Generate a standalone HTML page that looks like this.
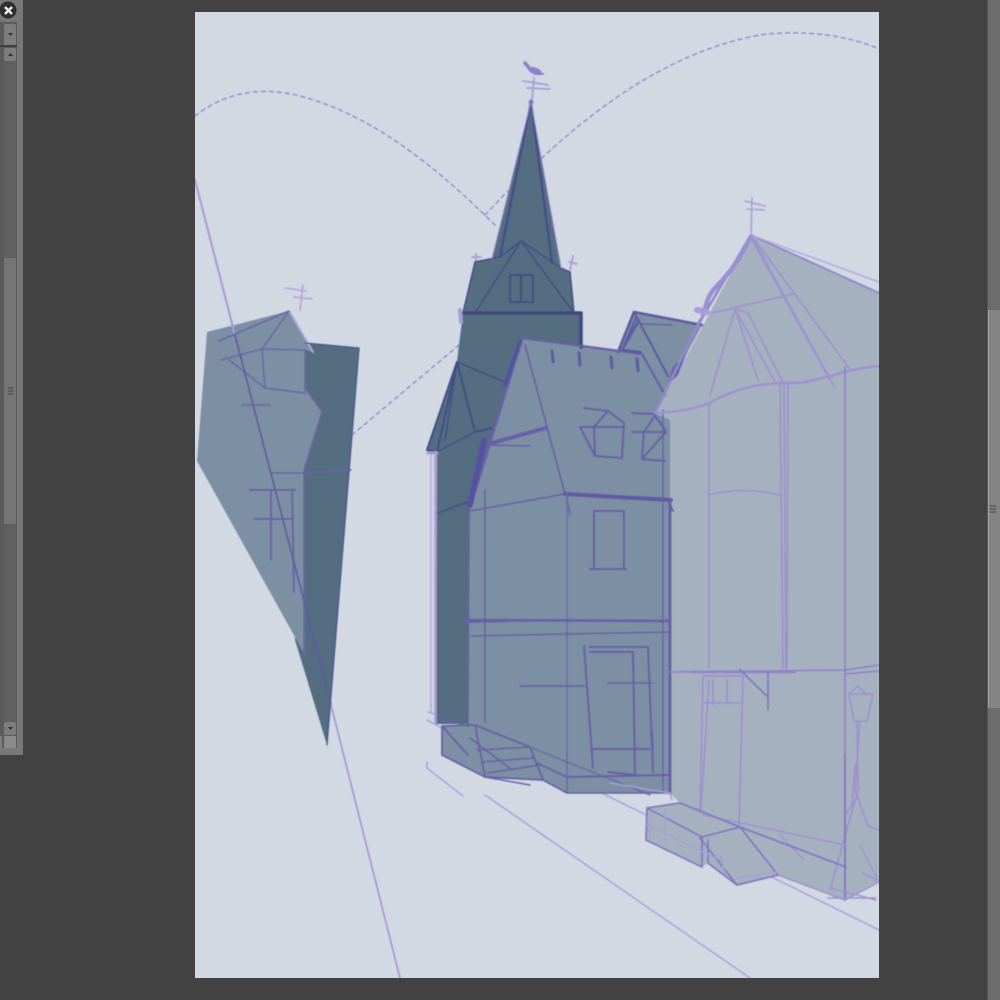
<!DOCTYPE html>
<html><head><meta charset="utf-8"><style>
html,body{margin:0;padding:0;background:#424242;width:1000px;height:1000px;overflow:hidden}
svg{position:absolute;left:0;top:0}
</style></head><body>
<svg width="1000" height="1000" viewBox="0 0 1000 1000" fill="none" stroke-linecap="round" stroke-linejoin="round">
<defs><filter id="b" x="-5%" y="-5%" width="110%" height="110%"><feGaussianBlur stdDeviation="0.5"/></filter></defs>
<rect width="1000" height="1000" fill="#424242"/>
<!-- canvas -->
<rect x="195" y="12" width="684" height="966" fill="#d2d9e3"/>
<clipPath id="c"><rect x="195" y="12" width="684" height="966"/></clipPath>
<g clip-path="url(#c)"><g filter="url(#b)">
<!-- dashed guide curves -->
<g stroke="#8f84cb" stroke-width="1.3" stroke-dasharray="4 4">
<path d="M195 116C225 92 262 86 300 96C370 114 435 165 498 228"/>
<path d="M485 215C560 135 650 55 760 35C805 29 850 36 879 49"/>
<path d="M352 435L459 345"/>
</g>
<!-- road lines -->
<g stroke="#aea4dd" stroke-width="1.6">
<path d="M485 795L750 978"/>
<path d="M427 768L463 796"/>
<path d="M427 768V762"/>
<path d="M545 765L879 930"/>
<path d="M428 712L442 716"/>
<path d="M427 720L442 728"/>
<path d="M431 440V712"/>
</g>
<!-- left building -->
<polygon points="305,343 359,348 327,745 295,640 304,470" fill="#546d81"/>
<polygon points="207,332 289,311 313,352 305,350 305,388 322,412 304,470 305,655 197,461" fill="#7b8fa3"/>
<!-- tower -->
<polygon points="531,102 492,259 475,262 463,313 459,345 457,362 427,450 437,452 436,724 475,724 470,507 522,338 582,350 581,313 574,313 570,272 561,268" fill="#546d81"/>
<!-- back roof -->
<polygon points="633,311 702,325 665,395 642,354 618,352" fill="#7b8fa3"/>
<!-- mid building -->
<polygon points="522,338 642,354 665,395 670,420 670,793 567,793 543,780 485,777 442,755 442,726 468,724 470,507" fill="#7b8fa3"/>
<!-- right building -->
<polygon points="751,235 879,293 879,882 845,900 778,875 737,885 708,863 702,867 647,840 647,808 680,803 670,793 670,420 655,413 690,350" fill="#a6b1c0"/>

<!-- left building sketch -->
<g stroke="#b3a9e0" stroke-width="1.8">
<path d="M300 310L303 285M285 288L306 291M294 297L312 299"/>
<path d="M290 312L313 352"/>
</g>
<path d="M195 180L235 335" stroke="#a89cd8" stroke-width="2.2" stroke-dasharray="3 1.5"/>
<path d="M331 705L400 978" stroke="#a397d8" stroke-width="1.8" stroke-dasharray="3 1.5"/>
<g stroke="#6a64a8" stroke-width="1.5">
<path d="M219 341L289 311L262 349L305 350"/>
<path d="M221 360L262 349L265 388L305 393V350M229 360L265 388"/>
<path d="M242 405H270"/>
<path d="M271 473H304"/>
<path d="M304 473L351 470"/>
<path d="M305 388L322 412L304 470V655"/>
<path d="M250 490H295M254 519H291" stroke-width="2"/>
<path d="M271 490V560M292 490L294 592" stroke-width="2"/>
</g>
<path d="M235 335L331 705" stroke="#5e5aa2" stroke-width="1.8" stroke-dasharray="3 1.5"/>
<path d="M359 348L327 745M305 343L359 348" stroke="#4a5590" stroke-width="1.3"/>

<!-- vane -->
<g stroke="#a89cd8" stroke-width="1.8">
<path d="M534 78L532 100M523 81L548 85M527 88L550 89"/>
<path d="M476 262V254M472 257H481M570 270L573 256M569 262L577 264"/>
</g>
<path d="M525 63L530 69" stroke="#8d80cc" stroke-width="3.5"/>
<ellipse cx="535" cy="71" rx="7" ry="3.5" fill="#8d80cc" transform="rotate(20 535 71)"/>
<path d="M535 74H543" stroke="#8d80cc" stroke-width="2"/>
<circle cx="531" cy="102" r="2.5" fill="#8d80cc"/>
<!-- tower lines -->
<g stroke="#434d88" stroke-width="1.5">
<path d="M531 102L500 257M531 102L552 263" stroke-width="2.2"/>
<path d="M500 257L475 262M561 268L570 272"/>
<path d="M475 262L463 313M570 272L574 313"/>
<path d="M521 241L475 313M521 241L574 313M521 241L500 257M521 241L561 268"/>
<path d="M510 275H533V302H510ZM521 275V302" stroke-width="2"/>
<path d="M463 313H581V347" stroke-width="3.5" stroke="#3f4780"/>
<path d="M457 362L427 450L437 452L457 362L475 432L492 428" stroke-width="2"/>
<path d="M457 362L505 382M437 452L475 432M438 513L470 501"/>
<path d="M445 440L457 362"/>
</g>
<path d="M531 102L492 259M531 102L561 268" stroke="#8f84cb" stroke-width="1"/>
<path d="M435.5 452V722" stroke="#a89cd8" stroke-width="2.5"/>
<path d="M431 452V710" stroke="#b8aee2" stroke-width="1.3"/>
<path d="M428 453H437" stroke="#a89cd8" stroke-width="3"/>
<path d="M460 310L461 322" stroke="#a89cd8" stroke-width="4"/>

<!-- back roof lines -->
<g stroke="#5d58a2" stroke-width="2">
<path d="M634 312L702 325M634 312L618 352" stroke-width="2.6"/>
<path d="M634 312L668 376M622 350L636 318"/>
<path d="M642 324L672 325" stroke-width="1.3"/>
</g>
<!-- mid building lines -->
<g stroke="#675fa8" stroke-width="2">
<path d="M522 338L642 354L665 395" stroke-width="2.2"/>
<path d="M522 338L470 507" stroke-width="3"/>
<path d="M520 342L505 385" stroke="#5552a0" stroke-width="4"/>
<path d="M484 440L470 505" stroke="#5552a0" stroke-width="6"/>
<path d="M525 345L565 494" stroke-width="1.6"/>
<path d="M470 511L565 494" stroke-width="1.6"/>
<path d="M565 494L671 500" stroke="#5f58a4" stroke-width="4"/>
<path d="M668 500L673 511"/>
<path d="M566 494L570 515" stroke-width="1.5"/>
<path d="M567 494V793" stroke="#7068a8" stroke-width="1.5"/>
<path d="M492 443L546 428" stroke-width="4"/>
<path d="M490 445L530 446" stroke-width="1.5"/>
<path d="M552 351L553 362M579 353L580 365M611 357L612 368M637 359L638 371" stroke-width="3" stroke="#5d5aa0"/>
<path d="M584 408L608 411L624 423L622 458L595 456L594 427H580L595 456"/>
<path d="M608 411L594 427H624"/>
<path d="M632 413L654 414L665 430M654 417L644 432L642 459L665 461M632 432H666L642 459"/>
<path d="M594 511H624V569M594 511V569M590 569H626"/>
<path d="M466 620L670 621" stroke-width="2.6"/>
<path d="M465 622L565 620"/>
<path d="M472 636L670 632" stroke-width="1.5"/>
<path d="M485 490V722" stroke-width="1.5"/>
<path d="M520 686H585M608 683H652" stroke-width="1.5"/>
<path d="M584 646L593 768M590 647H648L652 747M590 652H633L635 775M592 749H650M608 772L635 775"/>
<path d="M652 732L653 772"/>
<path d="M670 500V793" stroke-width="3"/>
<path d="M469 507L468 724" stroke-width="1.6"/>
<path d="M663 410V793" stroke-width="1.3"/>
<path d="M567 777L670 775" stroke-width="2"/>
<path d="M437 718L468 726" stroke-width="1.5"/>
<path d="M442 726L475 725L530 747L543 780L485 777L442 755ZM475 725L485 777M442 726L468 755" stroke-width="1.8"/>
<path d="M477 750L530 747M482 762L534 758M487 773L540 765M470 738L512 770" stroke-width="1.5"/>
<path d="M537 763L567 777M543 780L567 793L670 793" stroke-width="1.6"/>
<path d="M485 777L530 785" stroke-width="1.4"/>
<path d="M532 748L650 795" stroke-width="1.2"/>
</g>

<!-- right building lines -->
<g stroke="#9d92cf" stroke-width="1.8">
<path d="M751 235L879 293" stroke="#8f84cb"/>
<path d="M751 235L879 282" stroke="#b3a9e0" stroke-width="1.5"/>
<path d="M751 235L835 388M755 240L849 368M751 238L830 380"/>
<path d="M751 235L702 318L655 413" stroke="#8f84cb" stroke-width="2.6"/>
<path d="M751 235L752 198M745 201L765 206M747 209L764 210" stroke="#aea4dd"/>
<path d="M712 313L793 294"/>
<path d="M735 309L710 395M735 309L758 380M735 309L775 382M735 309L748 313L784 385"/>
<path d="M655 413C680 412 695 408 708 404C735 388 760 382 800 383C830 378 850 368 879 366" stroke-width="2.6"/>
<path d="M709 405V668M780 384L783 668M784 384L786 668M788 384L787 668" />
<path d="M845 367V900" stroke="#8f84cb"/>
<path d="M708 495C735 489 760 489 782 496"/>
<path d="M670 672L845 670L879 665" stroke="#8f84cb"/>
<path d="M692 672H795" stroke="#8f84cb" stroke-width="2.6"/>
<path d="M845 674L879 671" stroke="#8f84cb"/>
<path d="M703 676L700 812M709 680L701 810M743 676L739 825M743 676H703M703 703H743M713 680V705M727 680V703"/>
<path d="M740 670L768 697M768 672V710" stroke="#8178bf"/>
<path d="M858 686L849 694L873 694L867 721H854L849 694M858 686L866 694M857 721L858 790L830 890M860 721L855 790L868 826L879 830"/>
<path d="M855 765L852 805L845 815"/>
<path d="M845 755V900" stroke="#7f75bd"/>
<path d="M845 900L879 882M845 900L778 875M830 888L876 900M828 898H875" stroke-width="1.5"/>
<path d="M860 845L878 880M862 873L879 881" stroke-width="1.4"/>
<path d="M703 815L845 845" stroke-width="1.6"/>
<path d="M780 835L804 860" stroke-width="1.3"/>
</g>
<g stroke="#8178bf" stroke-width="1.8">
<path d="M740 827L846 867"/>
<path d="M647 808L702 837V867M647 808L680 803L740 827L702 837M647 808L646 840L702 867"/>
<path d="M700 838L737 885L778 875L740 827M708 840L708 863L737 885"/>
</g>
<g stroke="#a89cd8" stroke-width="1.5">
<path d="M651 812L650 838M665 810V843M647 825L720 860M720 855L725 873"/>
<path d="M670 793L610 783M670 793L672 800"/>
<path d="M737 878L778 872"/>
</g>
<!-- thick roof sketch -->
<path d="M750 238C740 260 728 275 715 288C708 295 706 305 703 315" stroke="#9b8fd4" stroke-width="4.5"/>
<path d="M697 310L707 312" stroke="#a89cd8" stroke-width="6"/>
<polygon points="667,386 673,367 687,352 678,375" fill="#6a62ac"/>
<path d="M655 413L700 320" stroke="#9489cc" stroke-width="2.5"/>
<path d="M640 352L622 350M638 322L622 350" stroke="#5d58a2" stroke-width="2.5"/>
</g></g>

<!-- right scrollbar -->
<rect x="987" y="0" width="13" height="1000" fill="#6c6c6c"/>
<rect x="987" y="0" width="1" height="1000" fill="#585858"/>
<rect x="988" y="310" width="12" height="398" fill="#848484"/>
<rect x="988" y="310" width="1" height="398" fill="#a0a0a0"/>
<path d="M990 506H996M990 509H996M990 512H996" stroke="#444" stroke-width="1"/>

<!-- left panel -->
<rect x="0" y="0" width="23" height="755" fill="#787878"/>
<rect x="0" y="22" width="17" height="726" fill="#5b5b5b"/>
<rect x="4" y="24" width="12" height="22" rx="2" fill="#7d7d7d"/>
<rect x="0" y="45" width="17" height="2" fill="#3e3e3e"/>
<path d="M8 33H13L10.5 36Z" fill="#333"/>
<rect x="4" y="48" width="12" height="13" rx="2" fill="#7d7d7d"/>
<path d="M8 56H13L10.5 53Z" fill="#333"/>
<rect x="4" y="61" width="12" height="661" fill="#606060"/>
<rect x="4" y="258" width="12" height="266" rx="1" fill="#757575"/>
<path d="M8 388H13M8 391H13M8 394H13" stroke="#444" stroke-width="1"/>
<rect x="4" y="722" width="12" height="13" rx="2" fill="#7d7d7d"/>
<path d="M8 727H13L10.5 730Z" fill="#333"/>
<rect x="4" y="736" width="12" height="12" fill="#8a8a8a"/>
<rect x="0" y="736" width="2" height="12" fill="#808080"/>
<circle cx="8" cy="10" r="8.5" fill="#2e2e2e"/>
<path d="M5 7L12 14M12 7L5 14" stroke="#e8e8e8" stroke-width="2.6" stroke-linecap="butt"/>
</svg>
</body></html>
